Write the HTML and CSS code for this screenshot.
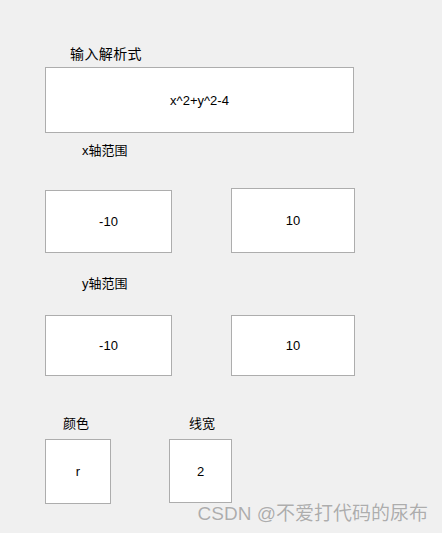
FILE: index.html
```html
<!DOCTYPE html>
<html lang="zh-CN">
<head>
    <meta charset="UTF-8">
    <meta name="viewport" content="width=device-width, initial-scale=1.0">
    <title>隐函数绘图</title>
    <link rel="stylesheet" href="styles.css">
</head>
<body>
    <div class="panel">
        <div class="label label-expr">输入解析式</div>
        <div class="box box-expr">x^2+y^2-4</div>

        <div class="label label-axis label-x">x轴范围</div>
        <div class="row row-x">
            <div class="box box-min">-10</div>
            <div class="box box-max">10</div>
        </div>

        <div class="label label-axis label-y">y轴范围</div>
        <div class="row row-y">
            <div class="box box-min">-10</div>
            <div class="box box-max">10</div>
        </div>

        <div class="row row-style">
            <div class="field field-color">
                <div class="label">颜色</div>
                <div class="box box-color">r</div>
            </div>
            <div class="field field-width">
                <div class="label">线宽</div>
                <div class="box box-width">2</div>
            </div>
        </div>
    </div>

    <div class="watermark">CSDN @不爱打代码的尿布</div>
</body>
</html>
```

FILE: styles.css
```css
body {
    margin: 0;
    background: #f0f0f0;
    color: #000;
    font-family: "Liberation Sans", "Noto Sans CJK SC", sans-serif;
    font-size: 13px;
    min-height: 533px;
    position: relative;
    overflow: hidden;
}

.panel {
    padding: 46px 0 0 45px;
}

.label {
    line-height: 15px;
    height: 15px;
    white-space: nowrap;
}

.label-expr {
    font-size: 14px;
    line-height: 16px;
    height: 16px;
    letter-spacing: 0.4px;
    margin-left: 25px;
}

.label-axis {
    margin-left: 37px;
}

.label-x {
    margin-top: 10px;
}

.label-y {
    margin-top: 23px;
}

.box {
    box-sizing: border-box;
    background: #fff;
    border: 1px solid #adadad;
    display: flex;
    align-items: center;
    justify-content: center;
}

.box-expr {
    width: 309px;
    height: 66px;
    margin-top: 5px;
}

.row {
    display: flex;
    align-items: flex-end;
}

.row-x {
    margin-top: 30px;
    gap: 59px;
}

.row-x .box-min {
    width: 127px;
    height: 63px;
}

.row-x .box-max {
    width: 124px;
    height: 65px;
}

.row-y {
    margin-top: 24px;
    gap: 59px;
}

.row-y .box-min {
    width: 127px;
    height: 61px;
}

.row-y .box-max {
    width: 124px;
    height: 61px;
}

.row-style {
    margin-top: 40px;
    gap: 58px;
    align-items: flex-start;
}

.field .box {
    margin-top: 8px;
}

.field-color .label {
    margin-left: 18px;
}

.field-width .label {
    margin-left: 20px;
}

.box-color {
    width: 66px;
    height: 65px;
}

.box-width {
    width: 63px;
    height: 64px;
}

.watermark {
    position: absolute;
    right: 14px;
    top: 502px;
    font-size: 19px;
    line-height: 24px;
    color: #adadad;
    text-shadow: 0 0 1px #fff;
    white-space: nowrap;
}
```
